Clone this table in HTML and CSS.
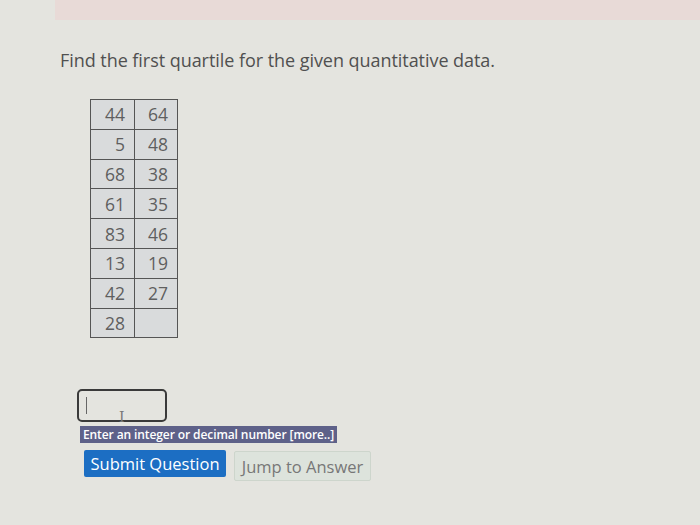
FILE: index.html
```html
<!DOCTYPE html>
<html>
<head>
<meta charset="utf-8">
<link rel="stylesheet" href="styles.css">
</head>
<body>
<div class="topband"></div>
<main class="content">
  <p class="question">Find the first quartile for the given quantitative data.</p>
  <table class="data">
    <tr><td>44</td><td>64</td></tr>
    <tr><td>5</td><td>48</td></tr>
    <tr><td>68</td><td>38</td></tr>
    <tr><td>61</td><td>35</td></tr>
    <tr><td>83</td><td>46</td></tr>
    <tr><td>13</td><td>19</td></tr>
    <tr><td>42</td><td>27</td></tr>
    <tr><td>28</td><td></td></tr>
  </table>
  <div class="answer">
    <div class="inputbox"><span class="caret"></span><span class="ibeam">I</span></div>
    <div class="hint">Enter an integer or decimal number [more..]</div>
    <div class="buttons">
      <button class="btn submit">Submit Question</button>
      <button class="btn jump">Jump to Answer</button>
    </div>
  </div>
</main>
</body>
</html>
```
FILE: styles.css
```css
html, body {
  margin: 0;
  padding: 0;
}
body {
  width: 700px;
  height: 525px;
  overflow: hidden;
  background: #e4e4df;
  font-family: "Open Sans", "Liberation Sans", sans-serif;
}
.topband {
  height: 20px;
  margin-left: 55px;
  background: #e8dad7;
}
.content {
  padding-left: 60px;
}
.question {
  margin: 27px 0 0 0;
  font-size: 18px;
  line-height: 26px;
  letter-spacing: -0.05px;
  color: #505050;
}
.data {
  margin: 26px 0 0 30px;
  border-collapse: collapse;
  background: #d9dbdc;
}
.data td {
  border: 1.5px solid #555;
  height: 28.8px;
  padding: 0 9px 0 0;
  text-align: right;
  font-size: 17.5px;
  color: #5f5f5f;
}
.data td:first-child { width: 34px; }
.data td:last-child { width: 33px; }
.answer {
  margin-top: 51px;
  margin-left: 17px;
}
.inputbox {
  position: relative;
  width: 86px;
  height: 29px;
  border: 2px solid #3a3a3a;
  border-radius: 5px;
}
.caret {
  position: absolute;
  left: 7px;
  top: 6px;
  width: 1px;
  height: 17px;
  background: #666;
}
.ibeam {
  position: absolute;
  left: 40px;
  top: 18px;
  font-size: 14px;
  line-height: 16px;
  color: #777;
  font-family: "DejaVu Serif", serif;
}
.hint {
  display: inline-block;
  margin: 1px 0 0 3px;
  padding: 0 3px;
  height: 17px;
  line-height: 17px;
  background: #5e6189;
  color: #fff;
  font-size: 12px;
  font-weight: 600;
  letter-spacing: -0.1px;
}
.buttons {
  display: flex;
  align-items: flex-start;
  gap: 8px;
  margin: 6px 0 0 7px;
}
.btn {
  font-family: "Open Sans", "Liberation Sans", sans-serif;
  font-size: 16.5px;
  padding: 0;
  cursor: pointer;
}
.submit {
  width: 142px;
  height: 27px;
  background: #1c6ec3;
  color: #fff;
  border: none;
  border-radius: 2px;
}
.jump {
  width: 137px;
  height: 30px;
  margin-top: 1px;
  background: #dde3dc;
  color: #777;
  border: 1px solid #cdd5cc;
  border-radius: 2px;
}
```
